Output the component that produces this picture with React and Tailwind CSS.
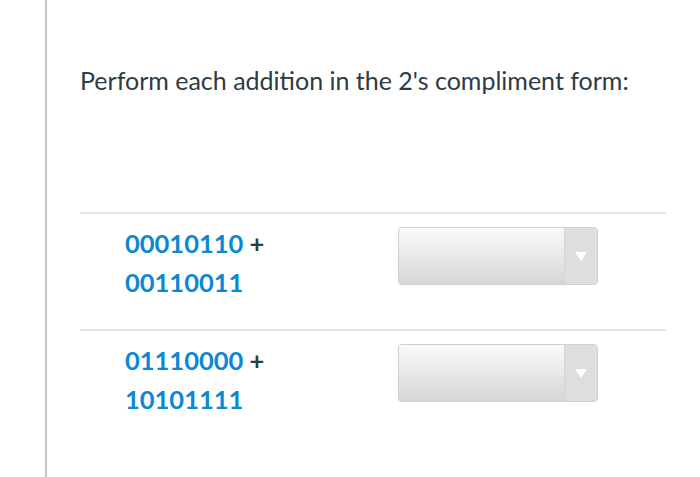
export default function App() {
  const rows = [
    ["00010110", "00110011"],
    ["01110000", "10101111"],
  ];
  return (
    <div className="w-[700px] h-[477px] bg-white overflow-hidden" style={{ fontFamily: "Lato, 'Open Sans', sans-serif" }}>
      <div className="ml-[45px] h-full border-l-2 border-[#c4c4c4] pl-[33px] pr-[34px] flex flex-col">
        <div className="pt-[62px] h-[212px] text-[25px] leading-[36px] text-[#2d3b45]">
          Perform each addition in the 2's compliment form:
        </div>
        {rows.map((r, i) => (
          <div key={i} className="border-t-2 border-[#e4e4e4] pt-[10px] pb-[27px] flex">
            <div className="pl-[45px] w-[318px] text-[25.5px] leading-[39px] font-bold">
              <div>
                <span className="text-[#0b87d4]">{r[0]}</span>
                <span className="text-[#2d3b45]"> +</span>
              </div>
              <div className="text-[#0b87d4]">{r[1]}</div>
            </div>
            <div className="mt-[3px] w-[200px] h-[58px] rounded-[4px] border border-[#cfcfcf] flex overflow-hidden bg-gradient-to-b from-[#fbfbfb] to-[#d6d6d6]">
              <div className="flex-1" />
              <div className="w-[33px] h-full bg-[#dedede] border-l border-[#d2d2d2] flex items-center justify-center">
                <svg width="12" height="10" viewBox="0 0 12 10">
                  <path d="M0 1 L12 1 L6 10 Z" fill="#ffffff" />
                </svg>
              </div>
            </div>
          </div>
        ))}
      </div>
    </div>
  );
}
